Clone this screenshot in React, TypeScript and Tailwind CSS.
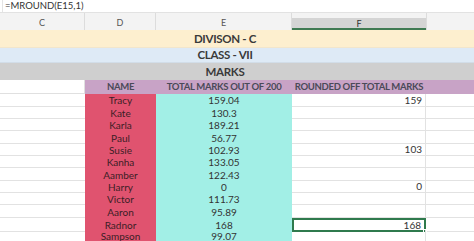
import React from "react";

const rows: [string, string, string][] = [
  ["Tracy", "159.04", "159"],
  ["Kate", "130.3", ""],
  ["Karla", "189.21", ""],
  ["Paul", "56.77", ""],
  ["Susie", "102.93", "103"],
  ["Kanha", "133.05", ""],
  ["Aamber", "122.43", ""],
  ["Harry", "0", "0"],
  ["Victor", "111.73", ""],
  ["Aaron", "95.89", ""],
  ["Radnor", "168", "168"],
  ["Sampson", "99.07", ""],
];

const cols = "grid grid-cols-[85px_71px_136px_134px_48px]";

export default function App() {
  return (
    <div
      className="w-[474px] h-[241px] overflow-hidden bg-white text-[#333]"
      style={{ fontFamily: "Lato, 'Open Sans', sans-serif" }}
    >
      {/* formula bar */}
      <div className="h-[12px] flex items-center border-l border-[#e4e4e4] ml-[2px] pl-[2px] text-[9.5px] text-[#333] leading-none">
        =MROUND(E15,1)
      </div>
      <div className="h-[1px] bg-[#e2e2e2]" />
      {/* column headers */}
      <div className={`${cols} h-[17px] bg-[#f3f3f3] text-[9px] leading-none text-[#555]`}>
        <div className="flex items-end justify-center pb-[3px] border-r border-[#dcdcdc]">C</div>
        <div className="flex items-end justify-center pb-[3px] border-r border-[#dcdcdc]">D</div>
        <div className="flex items-end justify-center pb-[3px] border-r border-[#dcdcdc]">E</div>
        <div className="flex flex-col justify-end">
          <div className="h-[12px] bg-[#d4d4d4] border-b-2 border-[#3f7a52] flex items-center justify-center text-[#333]">
            F
          </div>
        </div>
        <div className="border-l border-[#dcdcdc]" />
      </div>
      {/* title rows */}
      <div className="h-[18px] bg-[#fdefcf] border-b border-[#f2e6cc] flex items-center justify-center pr-[24px] font-bold text-[11.5px] tracking-[-0.3px] leading-none text-[#3a3a3a]">
        DIVISON - C
      </div>
      <div className="h-[15px] bg-[#deeaf6] border-b border-[#d2dde8] flex items-center justify-center pr-[24px] font-bold text-[11.5px] tracking-[-0.3px] leading-none text-[#3a3a3a]">
        CLASS - VII
      </div>
      <div className="h-[17px] bg-[#cfcfcf] flex items-center justify-center pr-[24px] font-bold text-[11.5px] tracking-[-0.3px] leading-none text-[#3a3a3a]">
        MARKS
      </div>
      {/* NAME header row */}
      <div className={`${cols} h-[14.3px] text-[9.5px] leading-none font-bold tracking-[-0.3px] whitespace-nowrap text-[#4a4a58]`}>
        <div className="border-b border-r border-[#e0e0e0]" />
        <div className="bg-[#c8a3c6] flex items-center justify-center">NAME</div>
        <div className="bg-[#c8a3c6] flex items-center justify-center">TOTAL MARKS OUT OF 200</div>
        <div className="bg-[#c8a3c6] flex items-center justify-center">ROUNDED OFF TOTAL MARKS</div>
        <div className="bg-[#c8a3c6]" />
      </div>
      {/* data rows */}
      {rows.map(([name, total, rounded], i) => {
        const selected = name === "Radnor";
        return (
          <div key={i} className={`${cols} h-[12.35px] text-[10px] leading-none`}>
            <div className="border-b border-[#e2e2e2]" />
            <div className="bg-[#e0536f] flex items-center justify-center text-[#3b1e26]">{name}</div>
            <div className="bg-[#a2efe6] flex items-center justify-center text-[#333]">{total}</div>
            <div
              className={`relative flex items-center justify-end pr-[3px] text-[#333] ${
                selected ? "border-2 border-[#2f7a4d]" : "border-b border-r border-[#e2e2e2]"
              }`}
            >
              {rounded}
              {selected && (
                <span className="absolute right-[-3px] bottom-[-3px] w-[4px] h-[4px] bg-[#2f7a4d] border border-white" />
              )}
            </div>
            <div className="border-b border-[#e2e2e2]" />
          </div>
        );
      })}
    </div>
  );
}
